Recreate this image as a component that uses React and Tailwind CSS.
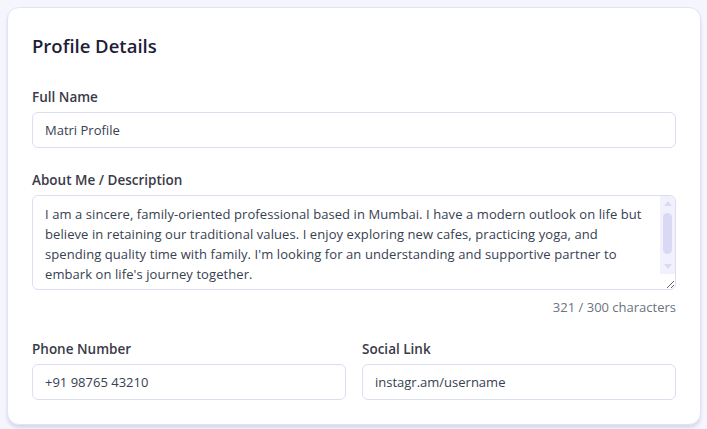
import React, { useState } from 'react';

export default function App() {
  const [nome, setNome] = useState('Matri Profile');
  const [sobre, setSobre] = useState(
    "I am a sincere, family-oriented professional based in Mumbai. I have a modern outlook on life but believe in retaining our traditional values. I enjoy exploring new cafes, practicing yoga, and spending quality time with family. I'm looking for an understanding and supportive partner to embark on life's journey together."
  );
  const [telefone, setTelefone] = useState('+91 98765 43210');
  const [social, setSocial] = useState('instagr.am/username');

  const inputClass =
    'w-full h-9 px-3 rounded-md bg-white border border-[#dcdcf5] outline-none text-[13px] text-[#374151] focus:border-indigo-400';
  const labelClass = 'block text-[13.5px] leading-5 font-semibold text-[#3a3a48] mb-[5px]';

  return (
    <div className="min-h-screen bg-[#f5f5fd] pt-[7px] pl-[7px] font-['Open_Sans',sans-serif]">
      <div className="w-[694px] bg-white border border-[#e2e2f7] rounded-xl shadow-[0_3px_3px_rgba(200,200,230,0.6)] p-6">
        <h2 className="text-[18.5px] leading-7 font-semibold text-[#1e1e38] mb-[27px]">Profile Details</h2>

        <div className="space-y-[22px]">
          {/* Nome */}
          <div>
            <label className={labelClass}>Full Name</label>
            <input className={inputClass} value={nome} onChange={(e) => setNome(e.target.value)} />
          </div>

          {/* Descrição */}
          <div>
            <label className={labelClass}>About Me / Description</label>
            <div className="relative">
              <textarea
                className="block w-full h-[95px] pl-3 pr-[27px] py-2 rounded-md bg-white border border-[#dcdcf5] outline-none overflow-hidden text-[13px] tracking-[0.08px] leading-5 text-[#374151]"
                value={sobre}
                onChange={(e) => setSobre(e.target.value)}
              />
              {/* barra de rolagem desenhada */}
              <div className="absolute top-px right-px w-[15px] h-[78px] bg-[#f1f1fd] rounded-tr-md flex flex-col items-center">
                <div className="h-[15px] flex items-center justify-center">
                  <div className="w-0 h-0 border-x-4 border-x-transparent border-b-[5px] border-b-[#d9d9f6]" />
                </div>
                <div className="flex-1 w-full px-[3px] py-[2px]">
                  <div className="h-[41px] rounded-full bg-[#d9d9f6]" />
                </div>
                <div className="h-[15px] flex items-center justify-center">
                  <div className="w-0 h-0 border-x-4 border-x-transparent border-t-[5px] border-t-[#d9d9f6]" />
                </div>
              </div>
            </div>
            <p className="mt-[7px] text-right text-[13px] leading-5 text-[#6b7280]">{sobre.length} / 300 characters</p>
          </div>

          {/* Telefone e social */}
          <div className="grid grid-cols-2 gap-4">
            <div>
              <label className={labelClass}>Phone Number</label>
              <input className={inputClass} value={telefone} onChange={(e) => setTelefone(e.target.value)} />
            </div>
            <div>
              <label className={labelClass}>Social Link</label>
              <input className={inputClass} value={social} onChange={(e) => setSocial(e.target.value)} />
            </div>
          </div>
        </div>
      </div>
    </div>
  );
}
